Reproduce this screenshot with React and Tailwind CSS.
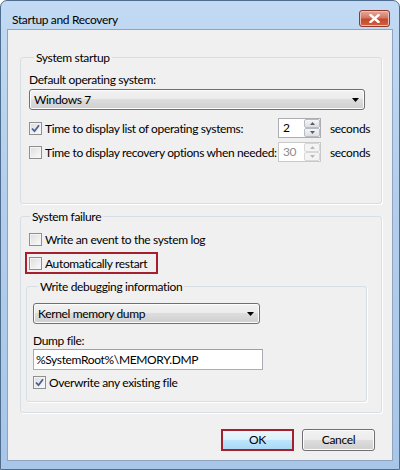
import React from "react";

const font = { fontFamily: 'Lato, "Noto Sans", sans-serif' };

const Check = ({ checked }) => (
  <span className="flex h-[13px] w-[13px] shrink-0 items-center justify-center border border-[#8e8f8f] bg-[linear-gradient(135deg,#dcdcdc,#fbfbfb)] shadow-[inset_0_0_0_1px_#f4f4f4]">
    {checked && (
      <svg width="9" height="9" viewBox="0 0 9 9">
        <path d="M1 4.5 L3.5 7.2 L8 1.2" fill="none" stroke="#4a5f97" strokeWidth="1.8" />
      </svg>
    )}
  </span>
);

const Arrow = () => (
  <svg width="7" height="4" viewBox="0 0 7 4" className="shrink-0">
    <path d="M0 0 H7 L3.5 4 Z" fill="#000" />
  </svg>
);

const Combo = ({ value, width }) => (
  <div
    className={`flex h-[21px] items-center justify-between rounded-[3px] border border-[#707070] bg-[linear-gradient(to_bottom,#f2f2f2_0%,#ebebeb_50%,#dddddd_50%,#cfcfcf_100%)] pl-[4px] pr-[5px] shadow-[inset_0_0_0_1px_#fcfcfc] ${width}`}
  >
    <span className="text-[12px] leading-[15px] text-black">{value}</span>
    <Arrow />
  </div>
);

const Spin = ({ value, disabled }) => (
  <div
    className={`flex h-[20px] w-[43px] shrink-0 items-stretch border bg-white ${
      disabled ? "border-[#c9c9c9] text-[#8d8d8d]" : "border-[#abadb3] text-black"
    }`}
  >
    <span className="flex-1 pl-[4px] text-[12px] leading-[18px]">{value}</span>
    <div className="flex w-[16px] flex-col">
      {[0, 1].map((i) => (
        <span
          key={i}
          className={`flex flex-1 items-center justify-center rounded-[2px] border ${
            disabled ? "border-[#d8d8d8] bg-[#f4f4f4]" : "border-[#b6bcc6] bg-[linear-gradient(to_bottom,#f6f6f6,#dedede)]"
          }`}
        >
          <svg width="5" height="3" viewBox="0 0 5 3">
            <path d={i === 0 ? "M0 3 L2.5 0 L5 3 Z" : "M0 0 L2.5 3 L5 0 Z"} fill={disabled ? "#b8b8b8" : "#4d5e7a"} />
          </svg>
        </span>
      ))}
    </div>
  </div>
);

const Group = ({ label, className, children }) => (
  <div className={`flex flex-col rounded-[3px] border border-[#d5dfe5] shadow-[1px_1px_0_#ffffff] ${className}`}>
    <span className="-mt-[8px] ml-[5px] w-fit bg-[#f0f0f0] px-[2px] text-[12px] leading-[15px] text-black">{label}</span>
    {children}
  </div>
);

const Button = ({ children, primary }) => (
  <button
    className={`flex h-[22px] w-[73px] items-center justify-center text-[12px] text-black ${
      primary
        ? "border-2 border-[#a3202c] bg-[linear-gradient(to_bottom,#eaf6fd_0%,#d9f0fc_50%,#bee6fd_50%,#a7d9f5_100%)]"
        : "rounded-[3px] border border-[#707070] bg-[linear-gradient(to_bottom,#f2f2f2_0%,#ebebeb_50%,#dddddd_50%,#cfcfcf_100%)] shadow-[inset_0_0_0_1px_#fcfcfc]"
    }`}
  >
    {children}
  </button>
);

export default function App() {
  return (
    <div
      style={font}
      className="flex h-[470px] w-[400px] flex-col whitespace-nowrap rounded-t-[7px] border border-[#4f6d8f] bg-[linear-gradient(to_bottom,#c2daf3,#b4cfec_40%,#a8c6e8)] px-[6px] tracking-[-0.35px]"
    >
      {/* Title bar */}
      <div className="flex h-[28px] shrink-0 items-start justify-between">
        <span className="pl-[5px] pt-[11px] text-[12px] leading-[15px] text-black">Startup and Recovery</span>
        <span className="mr-[3px] mt-[9px] flex h-[17px] w-[31px] items-center justify-center rounded-[3px] border border-[#8c3b2c] bg-[linear-gradient(to_bottom,#e9a99a_0%,#d47763_45%,#c24a2c_55%,#d3603f_100%)] shadow-[inset_0_0_0_1px_#eec0b5]">
          <svg width="11" height="9" viewBox="0 0 11 9">
            <path d="M1.5 1 L9.5 8 M9.5 1 L1.5 8" stroke="#fff" strokeWidth="2.4" strokeLinecap="square" />
          </svg>
        </span>
      </div>

      {/* Client area */}
      <div className="flex h-[432px] shrink-0 flex-col border border-[#8ea4bf] bg-[#f0f0f0] pl-[12px] pr-[10px] text-black">
        <Group label="System startup" className="mt-[27px] h-[147px] pl-[8px]">
          <span className="mt-[7px] text-[12px] leading-[15px]">Default operating system:</span>
          <div className="mt-[2px]">
            <Combo value="Windows 7" width="w-[336px]" />
          </div>
          <div className="mt-[8px] flex h-[20px] items-center">
            <div className="flex w-[249px] items-center gap-[3px]">
              <Check checked />
              <span className="text-[12px] leading-[15px]">Time to display list of operating systems:</span>
            </div>
            <Spin value="2" />
            <span className="ml-[9px] text-[12px] leading-[15px]">seconds</span>
          </div>
          <div className="mt-[4px] flex h-[20px] items-center">
            <div className="flex w-[249px] items-center gap-[3px]">
              <Check />
              <span className="text-[12px] leading-[15px]">Time to display recovery options when needed:</span>
            </div>
            <Spin value="30" disabled />
            <span className="ml-[9px] text-[12px] leading-[15px]">seconds</span>
          </div>
        </Group>

        <Group label="System failure" className="mt-[12px] h-[197px] pl-[4px]">
          <div className="ml-[4px] mt-[8px] flex h-[15px] items-center gap-[3px]">
            <Check />
            <span className="text-[12px] leading-[15px]">Write an event to the system log</span>
          </div>
          <div className="mt-[5px] flex h-[22px] w-[133px] items-center gap-[3px] border-2 border-[#a3202c] pl-[2px]">
            <Check />
            <span className="text-[12px] leading-[15px]">Automatically restart</span>
          </div>
          <Group label="Write debugging information" className="ml-[1px] mt-[12px] h-[116px] w-[341px] pl-[6px]">
            <div className="mt-[9px]">
              <Combo value="Kernel memory dump" width="w-[227px]" />
            </div>
            <span className="mt-[9px] text-[12px] leading-[15px]">Dump file:</span>
            <div className="mt-[1px] flex h-[21px] w-[230px] items-center border border-[#abadb3] border-t-[#a0a0a0] bg-white pl-[2px] text-[12px] leading-[15px]">
              %SystemRoot%\MEMORY.DMP
            </div>
            <div className="mt-[5px] flex h-[15px] items-center gap-[3px]">
              <Check checked />
              <span className="text-[12px] leading-[15px]">Overwrite any existing file</span>
            </div>
          </Group>
        </Group>

        <div className="mr-[7px] mt-[16px] flex justify-end gap-[8px]">
          <Button primary>OK</Button>
          <Button>Cancel</Button>
        </div>
      </div>
    </div>
  );
}
